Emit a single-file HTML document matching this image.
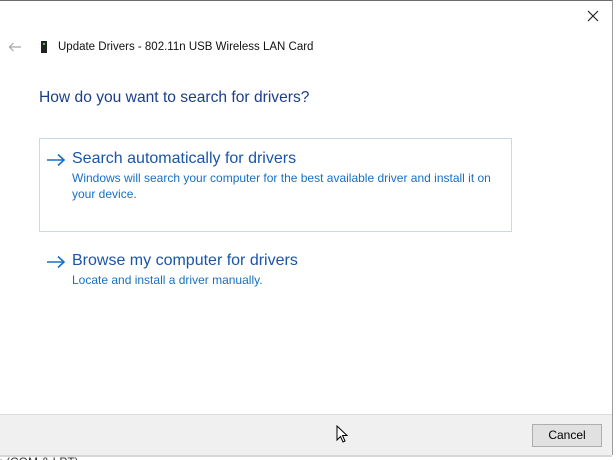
<!DOCTYPE html>
<html><head><style>
html,body{margin:0;width:616px;height:460px;overflow:hidden}
body{position:relative;background:#fff;font-family:"Liberation Sans",sans-serif}
.win{position:absolute;left:0;top:0;width:612px;height:454px;border-top:1px solid #6d6d6d;border-right:1px solid #9a9a9a;background:#fff}
.t{position:absolute;white-space:nowrap}
.footer{position:absolute;left:0;top:414px;width:612px;height:41px;background:#f0f0f0;border-top:1px solid #dcdcdc}
.btn{position:absolute;left:532px;top:424px;width:68px;height:21px;border:1px solid #adadad;background:#e1e1e1;font-size:12px;text-align:center;line-height:21px;color:#000}
.box{position:absolute;left:39px;top:137px;width:471px;height:92px;border:1px solid #c6dbe6}
.ot{color:#1a55a8;font-size:16px}
.od{color:#1a6fc0;font-size:12px;line-height:16px}
</style></head><body>
<div class="win">
<svg style="position:absolute;left:587px;top:9px" width="12" height="12"><path d="M1 1L11 11M11 1L1 11" stroke="#222" stroke-width="1.2"/></svg>
<svg style="position:absolute;left:8px;top:41px" width="14" height="10"><path d="M1 5H13M5.5 1L1.5 5L5.5 9" stroke="#a8a8a8" stroke-width="1.2" fill="none"/></svg>
<div style="position:absolute;left:41px;top:40px;width:6px;height:12px;background:#222"></div>
<div style="position:absolute;left:43px;top:42px;width:2px;height:2px;background:#4c4"></div>
<div class="t" style="left:58px;top:40px;font-size:11.5px;color:#111">Update Drivers - 802.11n USB Wireless LAN Card</div>
<div class="t" style="left:39px;top:88px;font-size:15.6px;color:#1a3e8c">How do you want to search for drivers?</div>
<div class="box"></div>
<svg style="position:absolute;left:46px;top:152px" width="20" height="14"><path d="M1 7H18M12 1.5L18 7L12 12.5" stroke="#1a6fc0" stroke-width="1.6" fill="none"/></svg>
<div class="t ot" style="left:72px;top:149px">Search automatically for drivers</div>
<div class="t od" style="left:72px;top:169px">Windows will search your computer for the best available driver and install it on<br>your device.</div>
<svg style="position:absolute;left:46px;top:254px" width="20" height="14"><path d="M1 7H18M12 1.5L18 7L12 12.5" stroke="#1a6fc0" stroke-width="1.6" fill="none"/></svg>
<div class="t ot" style="left:72px;top:251px">Browse my computer for drivers</div>
<div class="t od" style="left:72px;top:271px">Locate and install a driver manually.</div>
</div>
<div class="footer"></div>
<div class="btn">Cancel</div>
<svg style="position:absolute;left:336px;top:425px" width="12" height="18"><path d="M1 1V15L4.5 11.5L7 17L9 16L6.5 10.5H11Z" fill="#fff" stroke="#000" stroke-width="1"/></svg>
<div class="t" style="left:-4px;top:455px;font-size:12px;line-height:14px;color:#333;height:5px;overflow:hidden">t: (COM &amp; LPT)</div>
<div style="position:absolute;left:0;top:455px;width:612px;height:2px;background:#d8d8d8"></div>
</body></html>
